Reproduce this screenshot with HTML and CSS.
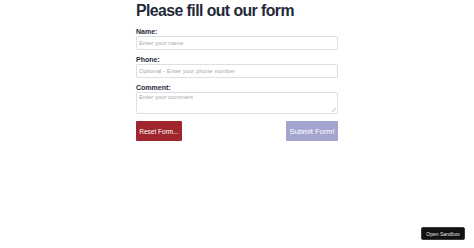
FILE: index.html
```html
<!DOCTYPE html>
<html>
<head>
<meta charset="utf-8">
<link rel="stylesheet" href="styles.css">
</head>
<body>
<main class="wrap">
  <h1 class="title">Please fill out our form</h1>
  <form class="form">
    <div class="field">
      <label class="label" for="name">Name:</label>
      <input class="input" id="name" type="text" placeholder="Enter your name">
    </div>
    <div class="field">
      <label class="label" for="phone">Phone:</label>
      <input class="input" id="phone" type="text" placeholder="Optional - Enter your phone number">
    </div>
    <div class="field">
      <label class="label" for="comment">Comment:</label>
      <textarea class="input area" id="comment" placeholder="Enter your comment"></textarea>
    </div>
    <div class="actions">
      <button type="button" class="btn reset">Reset Form...</button>
      <button type="button" class="btn submit">Submit Form!</button>
    </div>
  </form>
</main>
<a class="sandbox">Open Sandbox</a>
</body>
</html>
```
FILE: styles.css
```css
html, body {
  margin: 0;
  padding: 0;
  background: #ffffff;
}
body {
  font-family: "Liberation Sans", Arial, sans-serif;
  color: #1f2937;
}
.wrap {
  width: 202px;
  margin: 0 auto;
}
.title {
  margin: 0 0 7px;
  padding-top: 1px;
  font-size: 15.8px;
  line-height: 20px;
  font-weight: 700;
  letter-spacing: -0.55px;
  color: #1f2937;
}
.form {
  display: flex;
  flex-direction: column;
  gap: 6px;
}
.field {
  display: flex;
  flex-direction: column;
}
.label {
  font-size: 7px;
  line-height: 8px;
  font-weight: 700;
  color: #1f2937;
}
.input {
  box-sizing: border-box;
  width: 100%;
  height: 14px;
  margin: 0;
  padding: 0 2px;
  border: 1px solid #dcdfe4;
  border-radius: 1px;
  font-family: "Liberation Sans", Arial, sans-serif;
  font-size: 6px;
  color: #374151;
  background: #fff;
  outline: none;
}
.input::placeholder {
  color: #a3a9b3;
}
.area {
  height: 22px;
  padding-top: 1px;
  resize: none;
  background:
    linear-gradient(135deg, transparent 45%, #b8bcc4 45%, #b8bcc4 55%, transparent 55%) right 1px bottom 1px / 4px 4px no-repeat,
    #fff;
}
.actions {
  display: flex;
  justify-content: space-between;
  margin-top: 1px;
}
.btn {
  height: 20px;
  border: none;
  border-radius: 1px;
  color: #fff;
  font-family: "Liberation Sans", Arial, sans-serif;
  padding: 0;
}
.reset {
  width: 46px;
  background: #9f262c;
  font-size: 6.5px;
}
.submit {
  width: 52px;
  background: #a4a5cf;
  font-size: 7.5px;
}
.sandbox {
  position: fixed;
  right: 9px;
  bottom: 8px;
  box-sizing: border-box;
  width: 44px;
  height: 13px;
  display: flex;
  align-items: center;
  justify-content: center;
  background: #121212;
  border: 1px solid #3a3a3a;
  border-radius: 2px;
  color: #e6e6e6;
  font-size: 5px;
}
```
